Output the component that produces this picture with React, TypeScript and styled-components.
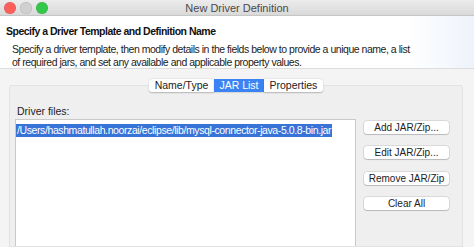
import React from 'react';
import styled, { createGlobalStyle } from 'styled-components';

const GlobalStyle = createGlobalStyle`
  html, body {
    margin: 0;
    padding: 0;
    width: 474px;
    height: 247px;
    overflow: hidden;
    background: #f4f4f4;
    font-family: "Liberation Sans", Arial, sans-serif;
    color: #222;
  }
`;

const Window = styled.div`
  width: 474px;
  height: 247px;
  display: flex;
  flex-direction: column;
  overflow: hidden;
`;

const TitleBar = styled.div`
  height: 16px;
  flex: none;
  display: flex;
  align-items: center;
  position: relative;
  background: linear-gradient(#ececec, #d9d9d9);
  border-bottom: 1px solid #c6c6c6;
  box-sizing: border-box;
  padding-left: 4px;
  gap: 4px;
`;

const Light = styled.span<{ $color: string }>`
  width: 12px;
  height: 12px;
  border-radius: 50%;
  background: ${(p) => p.$color};
  box-shadow: inset 0 0 0 0.5px rgba(0, 0, 0, 0.15);
`;

const Title = styled.div`
  position: absolute;
  left: 0;
  right: 0;
  text-align: center;
  font-size: 11px;
  color: #4a4a4a;
  line-height: 16px;
`;

const Header = styled.div`
  flex: none;
  height: 53px;
  box-sizing: border-box;
  background: linear-gradient(90deg, #ffffff 0%, #ffffff 86%, #eef3fb 100%);
  border-bottom: 1px solid #dcdcdc;
  padding: 8px 0 0 6px;
`;

const HeaderTitle = styled.div`
  font-weight: bold;
  font-size: 10.5px;
  letter-spacing: -0.5px;
  line-height: 14px;
  color: #111;
`;

const HeaderText = styled.div`
  margin-top: 5px;
  padding-left: 6px;
  font-size: 10.5px;
  letter-spacing: -0.47px;
  line-height: 13px;
  color: #222;
  white-space: nowrap;
`;

const Body = styled.div`
  flex: 1;
  padding: 10px 11px 0 9px;
  display: flex;
  flex-direction: column;
`;

const Tabs = styled.div`
  display: flex;
  justify-content: center;
  margin-bottom: -7px;
  position: relative;
  z-index: 1;
`;

const Tab = styled.div<{ $active?: boolean; $first?: boolean; $last?: boolean }>`
  height: 13px;
  line-height: 13px;
  font-size: 10.5px;
  padding: 0 5.5px;
  background: ${(p) => (p.$active ? '#3c83f3' : '#ffffff')};
  color: ${(p) => (p.$active ? '#ffffff' : '#222')};
  box-shadow: 0 0.5px 1.5px rgba(0, 0, 0, 0.25);
  border-radius: ${(p) => (p.$first ? '3px 0 0 3px' : p.$last ? '0 3px 3px 0' : '0')};
`;

const Panel = styled.div`
  flex: 1;
  background: #efefef;
  border: 1px solid #e2e2e2;
  border-radius: 3px 3px 0 0;
  padding: 18px 0 0 5px;
  display: flex;
  flex-direction: column;
`;

const Label = styled.div`
  font-size: 10.5px;
  line-height: 14px;
  color: #222;
  padding-left: 2px;
  margin-bottom: 1px;
`;

const Row = styled.div`
  flex: 1;
  display: flex;
  gap: 8px;
`;

const List = styled.div`
  width: 341px;
  box-sizing: border-box;
  background: #ffffff;
  border: 1px solid #c9c9c9;
  border-bottom: none;
  white-space: nowrap;
  overflow: hidden;
`;

const ListItem = styled.div<{ $selected?: boolean }>`
  display: inline-block;
  font-size: 10.5px;
  letter-spacing: -0.4px;
  line-height: 13px;
  padding: 0 1px;
  background: ${(p) => (p.$selected ? '#3874d8' : 'transparent')};
  color: ${(p) => (p.$selected ? '#ffffff' : '#222')};
`;

const Buttons = styled.div`
  display: flex;
  flex-direction: column;
  gap: 12.3px;
  padding-top: 2px;
`;

const Button = styled.button`
  width: 85px;
  height: 13px;
  padding: 0;
  border: none;
  border-radius: 3px;
  background: #ffffff;
  box-shadow: 0 0 0 0.5px rgba(0, 0, 0, 0.18), 0 1px 1px rgba(0, 0, 0, 0.15);
  font-family: "Liberation Sans", Arial, sans-serif;
  font-size: 10px;
  line-height: 13px;
  color: #222;
  white-space: nowrap;
`;

export default function App() {
  return (
    <Window>
      <GlobalStyle />
      <TitleBar>
        <Light $color="#fc605c" />
        <Light $color="#d0d0d0" />
        <Light $color="#34c84a" />
        <Title>New Driver Definition</Title>
      </TitleBar>
      <Header>
        <HeaderTitle>Specify a Driver Template and Definition Name</HeaderTitle>
        <HeaderText>
          Specify a driver template, then modify details in the fields below to provide a unique name, a list
          <br />
          of required jars, and set any available and applicable property values.
        </HeaderText>
      </Header>
      <Body>
        <Tabs>
          <Tab $first>Name/Type</Tab>
          <Tab $active>JAR List</Tab>
          <Tab $last>Properties</Tab>
        </Tabs>
        <Panel>
          <Label>Driver files:</Label>
          <Row>
            <List>
              <ListItem $selected>/Users/hashmatullah.noorzai/eclipse/lib/mysql-connector-java-5.0.8-bin.jar</ListItem>
            </List>
            <Buttons>
              <Button>Add JAR/Zip...</Button>
              <Button>Edit JAR/Zip...</Button>
              <Button>Remove JAR/Zip</Button>
              <Button>Clear All</Button>
            </Buttons>
          </Row>
        </Panel>
      </Body>
    </Window>
  );
}
